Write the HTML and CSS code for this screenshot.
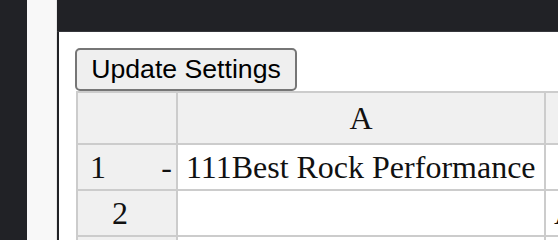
FILE: index.html
```html
<!DOCTYPE html>
<html>
<head>
<meta charset="utf-8">
<link rel="stylesheet" href="styles.css">
</head>
<body>
<div class="app">
  <div class="rail"></div>
  <div class="side"></div>
  <div class="main">
    <div class="topbar"></div>
    <div class="content">
      <button class="btn">Update Settings</button>
      <table class="grid">
        <colgroup>
          <col class="c0">
          <col class="c1">
          <col class="c2">
        </colgroup>
        <tr class="head">
          <th class="corner"></th>
          <th>A</th>
          <th>B</th>
        </tr>
        <tr class="row">
          <td class="rh"><div class="rh-in"><span>1</span><span>-</span></div></td>
          <td>111Best Rock Performance</td>
          <td></td>
        </tr>
        <tr class="row">
          <td class="rh child"><span>2</span></td>
          <td></td>
          <td>Artist</td>
        </tr>
        <tr class="row">
          <td class="rh child"><span>3</span></td>
          <td></td>
          <td></td>
        </tr>
      </table>
    </div>
  </div>
</div>
</body>
</html>
```

FILE: styles.css
```css
html, body {
  margin: 0;
  padding: 0;
  width: 558px;
  height: 240px;
  overflow: hidden;
  background: #212226;
}

.app {
  display: flex;
  height: 240px;
}

.rail {
  width: 27px;
  flex: none;
  background: #212226;
}

.side {
  width: 29px;
  flex: none;
  background: #f8f8f8;
  border-right: 1px solid #e6e6e6;
}

.main {
  flex: 1;
  min-width: 0;
  display: flex;
  flex-direction: column;
  background: #212226;
}

.topbar {
  height: 31px;
  flex: none;
  border-bottom: 1px solid #36373c;
}

.content {
  flex: 1;
  margin-left: 2px;
  background: #ffffff;
  padding: 16px 0 0 16px;
  overflow: hidden;
}

.btn {
  display: block;
  box-sizing: border-box;
  height: 43px;
  width: 222px;
  margin: 0;
  padding: 0 14px;
  font-family: "Liberation Sans", Arial, sans-serif;
  font-size: 26.67px;
  color: #000;
  background: #efefef;
  border: 2px solid #767676;
  border-radius: 5px;
  text-align: center;
}

.grid {
  border-collapse: collapse;
  table-layout: fixed;
  width: 580px;
  font-family: "Liberation Serif", "Times New Roman", serif;
  font-size: 32px;
  color: #111;
  margin-left: 1px;
}

.c0 { width: 100px; }
.c1 { width: 368px; }
.c2 { width: 112px; }

.grid th, .grid td {
  border: 2px solid #cccccc;
  padding: 0 8px;
  white-space: nowrap;
  overflow: hidden;
  text-align: left;
}

.head th {
  height: 50px;
  background: #f0f0f0;
  font-weight: normal;
  text-align: center;
  padding: 0;
}

.row td {
  height: 44px;
  background: #ffffff;
}

.row td.rh {
  background: #f0f0f0;
  padding: 0 4px 0 12px;
}

.rh-in {
  display: flex;
  justify-content: space-between;
}

.row td.child {
  padding-left: 34px;
}
```
